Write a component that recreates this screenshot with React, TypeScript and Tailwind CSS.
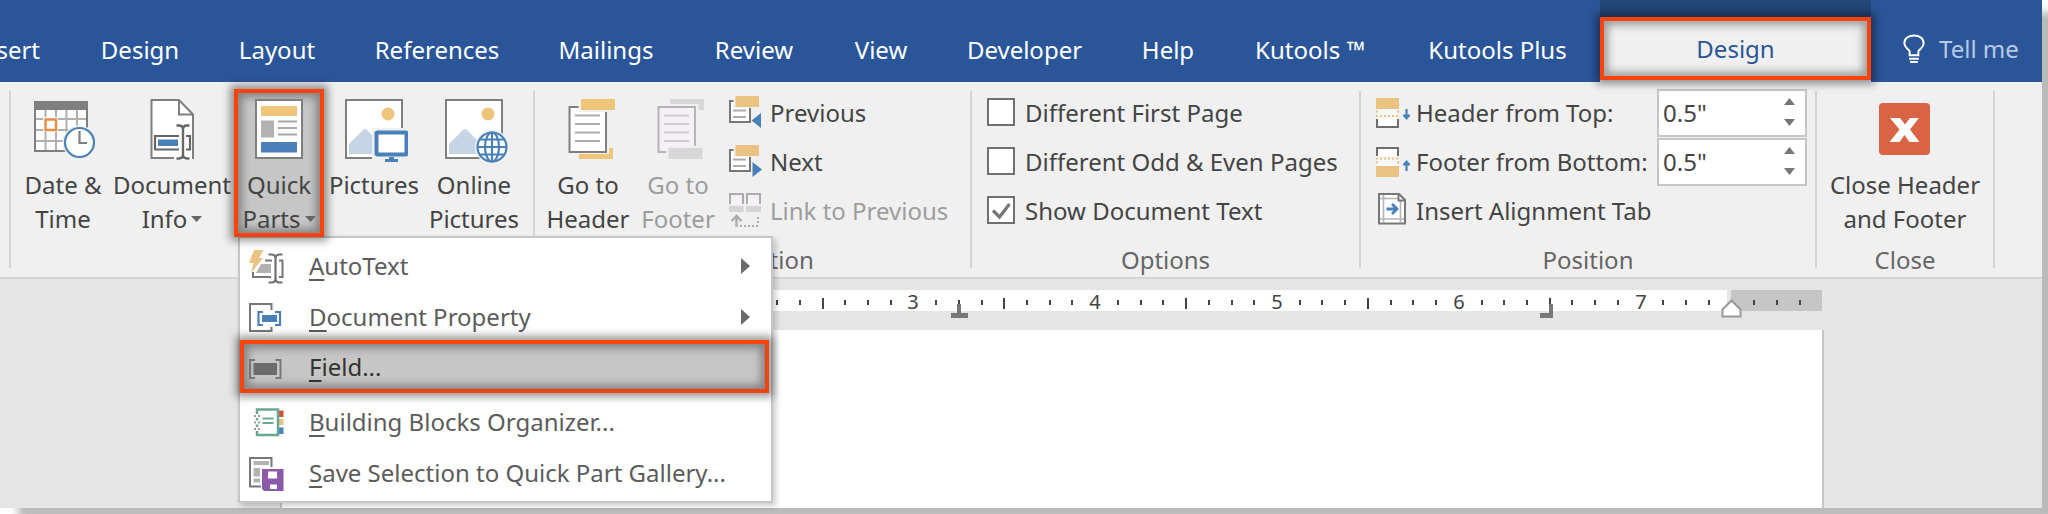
import type { ReactNode } from "react";

const GREY = "#7f7f7f";
const GOLD = "#efc57c";
const BLUE = "#4a80b8";

function Caret() {
  return (
    <svg width="11" height="6" viewBox="0 0 11 6" className="inline-block align-middle">
      <path d="M0 0h11L5.500 6z" fill="#666" />
    </svg>
  );
}

function DateTimeIcon() {
  return (
    <svg width="64" height="64" viewBox="0 0 64 64">
      <rect x="4" y="4" width="52" height="49" fill="#fff" stroke={GREY} strokeWidth="2" />
      <rect x="3" y="3" width="54" height="9" fill={GREY} />
      <path d="M14.500 12v40M25 12v40M35.500 12v40M46 12v40M5 21h50M5 32h50M5 43h50" stroke="#b0b0b0" strokeWidth="2" fill="none" />
      <rect x="12" y="19" width="15" height="15" fill="#fff" />
      <rect x="14.500" y="21.500" width="10.500" height="10.500" fill="#fff" stroke="#e88d45" strokeWidth="2.500" />
      <circle cx="48.500" cy="44.500" r="17" fill="#f0f0f0" />
      <circle cx="48.500" cy="44.500" r="14.500" fill="#fff" stroke={BLUE} strokeWidth="2.200" />
      <path d="M48.500 33v12H56" fill="none" stroke={GREY} strokeWidth="2.200" />
    </svg>
  );
}

function DocumentInfoIcon() {
  return (
    <svg width="44" height="64" viewBox="0 0 44 64">
      <path d="M1.500 2H29l14 14.500V60H1.500z" fill="#fff" stroke={GREY} strokeWidth="2" />
      <path d="M29 2v14.500h14" fill="none" stroke={GREY} strokeWidth="2" />
      <rect x="24" y="56" width="18" height="6" fill="#fff" />
      <path d="M29 38H5v13.500h24M36 38h4v13.500H36" fill="none" stroke="#666" strokeWidth="2.200" />
      <rect x="8" y="41.500" width="20" height="6.500" fill={BLUE} />
      <path d="M33 26v35" stroke="#fff" strokeWidth="6" />
      <path
        d="M26.500 27.500h2.500q4 0 4 4 0-4 4-4h2.500M33 30v28M26.500 60.500h2.500q4 0 4-4 0 4 4 4h2.500"
        fill="none"
        stroke="#666"
        strokeWidth="2.400"
      />
    </svg>
  );
}

function QuickPartsIcon() {
  return (
    <svg width="48" height="64" viewBox="0 0 48 64">
      <rect x="1" y="2" width="46" height="58" fill="#fff" stroke={GREY} strokeWidth="2" />
      <rect x="6" y="8" width="36" height="10" fill={GOLD} />
      <rect x="6" y="22.500" width="13" height="17" fill="#b2b2b2" />
      <path d="M23 23.500h19M23 30h19M23 36.500h19" stroke="#a8a8a8" strokeWidth="2" />
      <rect x="6" y="44" width="36" height="10.500" fill={BLUE} />
    </svg>
  );
}

function PictureBase() {
  return (
    <>
      <rect x="6" y="2" width="56" height="58" fill="#fff" stroke={GREY} strokeWidth="2" />
      <circle cx="48" cy="16" r="6.500" fill={GOLD} />
      <path d="M9 56V46L23 32q2-2 4 0l16 16v8z" fill="#c6d5e6" />
    </>
  );
}

function PicturesIcon() {
  return (
    <svg width="68" height="66" viewBox="0 0 68 66">
      <PictureBase />
      <rect x="32" y="30" width="38" height="36" fill="#f0f0f0" />
      <rect x="36.500" y="34.500" width="30" height="22" rx="1" fill="#fff" stroke={BLUE} strokeWidth="4" />
      <path d="M49 59h5v2h4v3H45v-3h4z" fill={BLUE} />
    </svg>
  );
}

function OnlinePicturesIcon() {
  return (
    <svg width="68" height="66" viewBox="0 0 68 66">
      <PictureBase />
      <circle cx="52" cy="49" r="17" fill="#f0f0f0" />
      <g fill="none" stroke={BLUE} strokeWidth="2.200">
        <circle cx="52" cy="49" r="14.500" fill="#fff" />
        <ellipse cx="52" cy="49" rx="7" ry="14.500" />
        <path d="M52 34.500v29M37.500 49h29M40 41.500h24M40 56.500h24" />
      </g>
    </svg>
  );
}

function GoToHeaderIcon() {
  return (
    <svg width="56" height="64" viewBox="-2 0 56 64">
      <path d="M47 50h4v11H17v-5h30z" fill={GOLD} />
      <rect x="7.500" y="9" width="36.500" height="45" fill="#fff" stroke={GREY} strokeWidth="2" />
      <rect x="16.500" y="0" width="37" height="14" fill="#f0f0f0" />
      <rect x="19" y="1" width="34" height="11" fill={GOLD} />
      <path d="M13 17.500h25M13 26h25M13 34.500h25M13 43h25" stroke="#acacac" strokeWidth="2" />
    </svg>
  );
}

function GoToFooterIcon() {
  return (
    <svg width="56" height="64" viewBox="0 0 56 64">
      <path d="M20 1h34v11h-5.500V6H20z" fill="#d8d6d8" />
      <rect x="8.500" y="9" width="36.500" height="45" fill="#f6f1f6" stroke="#b4b4b4" strokeWidth="2" />
      <rect x="16" y="48" width="38" height="14" fill="#f0f0f0" />
      <rect x="18.500" y="50" width="34" height="11" fill="#d8d6d8" />
      <path d="M14 17.500h25M14 26h25M14 34.500h25M14 43h25" stroke="#cfcbcf" strokeWidth="2" />
    </svg>
  );
}

function StepIcon({ forward = false }: { forward?: boolean }) {
  return (
    <svg width="34" height="34" viewBox="0 0 34 34">
      <rect x="1" y="6" width="20" height="21" fill="#fff" stroke="#777" strokeWidth="2" />
      <rect x="4.500" y="0" width="28" height="13" fill="#f0f0f0" />
      <rect x="6.500" y="1" width="23.500" height="11" fill="#eac282" />
      <path d="M4 15.500h13M4 22h13" stroke="#acacac" strokeWidth="2" />
      <rect x="22" y="14" width="12" height="20" fill="#f0f0f0" />
      <path d={forward ? "M23.500 18v15l9.500-7.500z" : "M32 18v15l-9.500-7.500z"} fill={BLUE} />
    </svg>
  );
}

function LinkPreviousIcon() {
  return (
    <svg width="34" height="34" viewBox="0 0 34 34" fill="none" stroke="#acacac" strokeWidth="2">
      <path d="M1 11V1h13v10M18 11V1h13v10" fill="#f6f1f6" />
      <path d="M0 16h14.500M17 16h15" stroke="#d6d4d6" strokeWidth="6" />
      <path d="M7.500 34V23M2.500 28l5-5 5 5" strokeWidth="2.400" />
      <path d="M11 33h20M29 24v8" strokeDasharray="2 2" />
    </svg>
  );
}

function FromTopIcon() {
  return (
    <svg width="36" height="34" viewBox="0 0 36 34" fill="none">
      <rect x="0" y="3" width="23" height="11" fill="#eac282" />
      <rect x="1" y="14" width="21" height="18" fill="#f8f8f8" />
      <path d="M0 21h23M1 15.500v4M22 15.500v4" stroke="#eac282" strokeWidth="2" strokeDasharray="2 2" />
      <path d="M1 24v8h21v-8" fill="#fff" stroke="#6e6e6e" strokeWidth="2" />
      <path d="M30.500 14v7" stroke={BLUE} strokeWidth="2.200" />
      <path d="M27 19.500h7v1.500l-3.500 4-3.500-4z" fill={BLUE} />
    </svg>
  );
}

function FromBottomIcon() {
  return (
    <svg width="36" height="34" viewBox="0 0 36 34" fill="none">
      <rect x="1" y="4" width="21" height="18" fill="#f8f8f8" />
      <path d="M1 12V4h21v8" fill="#fff" stroke="#6e6e6e" strokeWidth="2" />
      <path d="M0 14.500h23M1 17.500v3M22 17.500v3" stroke="#eac282" strokeWidth="2" strokeDasharray="2 2" />
      <rect x="0" y="22" width="23" height="11" fill="#eac282" />
      <path d="M30.500 27v-7" stroke={BLUE} strokeWidth="2.200" />
      <path d="M27 21.500h7V20l-3.500-4-3.500 4z" fill={BLUE} />
    </svg>
  );
}

function AlignmentTabIcon() {
  return (
    <svg width="36" height="34" viewBox="0 0 36 34" fill="none">
      <path d="M3 1h20l6 6v23.500H3z" fill="#fff" stroke="#777" strokeWidth="2" />
      <path d="M7.500 2v28M24.500 8v22M4 5.500h18M4 26h24" stroke="#b4b4b4" strokeWidth="1.600" />
      <path d="M22.500 1v6.500H29" stroke="#777" strokeWidth="2" />
      <path d="M10.500 16h10M16 11l5 5-5 5" stroke={BLUE} strokeWidth="2.800" />
    </svg>
  );
}

function CloseIcon() {
  return (
    <svg width="52" height="64" viewBox="0 0 52 64">
      <rect x="0" y="5" width="51" height="52" rx="4" fill="#d96345" />
      <path d="M11 20h10l5 6.500 5-6.500h9l-9 11.500L40.500 44h-10L25.500 37l-5 7h-10l10-12.500z" fill="#fff" />
    </svg>
  );
}

function BulbIcon() {
  return (
    <svg width="22" height="30" viewBox="0 0 22 31" fill="none" stroke="#fff" strokeWidth="2">
      <path d="M6.500 22v-4C5.500 15.500 1 14 1 9.500 1 4.500 5.500 1.500 11 1.500s10 3 10 8c0 4.500-4.500 6-5.500 8.500v4zM6 25.500h10M7 29h8" />
    </svg>
  );
}

function AutoTextIcon() {
  return (
    <svg width="36" height="36" viewBox="0 0 36 36" fill="none">
      <path d="M8 29h14M16 12.500h7M4 24v5h5M30 12.500h3.500V29H30" stroke="#777" strokeWidth="2" />
      <path d="M12 16h10v9H7z" fill="#b2b2b2" />
      <path d="M5 2h9.500L10 10h4L2 25l2.500-10H0z" fill="#eac282" />
      <path
        d="M19.500 6.500h3q4 0 4 4 0-4 4-4h3M26.500 9v23M19.500 34.500h3q4 0 4-4 0 4 4 4h3"
        stroke="#707070"
        strokeWidth="2.200"
      />
    </svg>
  );
}

function DocPropertyIcon() {
  return (
    <svg width="36" height="36" viewBox="0 0 36 36" fill="none">
      <path d="M22.500 11V5H1v27h21.500v-4" stroke="#777" strokeWidth="2" />
      <path d="M14 13H9.500v13H14M26 13h5v13h-5" stroke={BLUE} strokeWidth="2.200" />
      <rect x="13" y="16" width="15" height="7" fill={BLUE} />
    </svg>
  );
}

function FieldIcon() {
  return (
    <svg width="36" height="36" viewBox="0 0 36 36" fill="none">
      <path d="M6 11H1v18h5M26.500 11h5v18h-5" stroke="#777" strokeWidth="2" />
      <rect x="4.500" y="14" width="23.500" height="12" fill="#6c6c6c" />
    </svg>
  );
}

function OrganizerIcon() {
  return (
    <svg width="36" height="36" viewBox="0 0 36 36" fill="none">
      <rect x="30" y="6.500" width="4.500" height="6.500" fill="#d6532f" />
      <rect x="30" y="15" width="4.500" height="6" fill="#e8c283" />
      <rect x="30" y="23.500" width="4.500" height="6.500" fill={BLUE} />
      <rect x="8" y="5.500" width="21" height="25.500" fill="#fff" stroke="#6aa793" strokeWidth="2.500" />
      <path d="M13.500 14.500h11M13.500 19h11" stroke="#6aa793" strokeWidth="2" />
      <path d="M5 12h6M5 18.500h6M5 25h6" stroke="#fff" strokeWidth="4" />
      <path d="M5 12h6M5 18.500h6M5 25h6" stroke="#9a9a9a" strokeWidth="2" strokeDasharray="2 2" />
    </svg>
  );
}

function SaveSelectionIcon() {
  return (
    <svg width="36" height="36" viewBox="0 0 36 36" fill="none">
      <path d="M22.500 12V3H1v28.500h11" stroke="#777" strokeWidth="2" />
      <path d="M4.500 6h15.500v4H4.500zM4.500 13H11v8.500H4.500zM4.500 23.500H11v4H4.500z" fill="#b2b2b2" />
      <path d="M13 14h21.500v22H15l-2-2z" fill="#8b5aa8" />
      <rect x="19" y="16.500" width="9" height="7" fill="#fff" />
      <rect x="21" y="29.500" width="7" height="4.500" fill="#fff" />
    </svg>
  );
}

const tabs = [
  { name: "Design", width: "w-[136px]" },
  { name: "Layout", width: "w-[138px]" },
  { name: "References", width: "w-[182px]" },
  { name: "Mailings", width: "w-[156px]" },
  { name: "Review", width: "w-[140px]" },
  { name: "View", width: "w-[114px]" },
  { name: "Developer", width: "w-[173px]" },
  { name: "Help", width: "w-[114px]" },
  { name: "Kutools ™", width: "w-[170px]" },
  { name: "Kutools Plus", width: "w-[205px]" },
];

const callout =
  "border-4 border-[#f9430a] shadow-[0_0_8px_4px_rgba(0,0,0,0.4),inset_0_0_8px_4px_rgba(0,0,0,0.35)]";

function TabBar() {
  return (
    <nav className="flex h-[82px] bg-[#2a5699] text-white">
      <button className="flex w-[72px] items-center justify-end overflow-hidden pt-[17px] pr-8">Insert</button>
      {tabs.map((t) => (
        <button key={t.name} className={`${t.width} shrink-0 pt-[17px] whitespace-nowrap`}>
          {t.name}
        </button>
      ))}
      <div className="w-[271px] shrink-0 bg-[#f0f0f0]">
        <div className="h-[17px] bg-[#24477a]" />
        <button className={`relative h-[63px] w-full text-[#2a5699] ${callout}`}>Design</button>
      </div>
      <button className="flex items-center gap-[14px] pt-4 pl-8 whitespace-nowrap text-[#b8c9e2]">
        <BulbIcon />
        Tell me
      </button>
    </nav>
  );
}

function Separator() {
  return <div className="mt-0.5 h-[177px] w-0.5 shrink-0 bg-[#d4d4d4]" />;
}

function Group({ caption, width, children }: { caption: string; width: string; children: ReactNode }) {
  return (
    <section className={`flex shrink-0 flex-col ${width}`}>
      <div className="flex h-[157px] items-start">{children}</div>
      <h2 className="text-center leading-7 text-[#666]">{caption}</h2>
    </section>
  );
}

type BigButtonProps = {
  icon: ReactNode;
  lines: [string, string?];
  width: string;
  caret?: boolean;
  disabled?: boolean;
  look?: string;
};

function BigButton({ icon, lines, width, caret, disabled, look = "pt-[9px]" }: BigButtonProps) {
  return (
    <button
      disabled={disabled}
      className={`flex h-[148px] shrink-0 flex-col items-center whitespace-nowrap leading-[34px] ${width} ${look} ${disabled ? "text-[#9d9d9d]" : ""}`}
    >
      <span className="mb-1.5 flex h-16 items-start">{icon}</span>
      <span>{lines[0]}</span>
      <span className="flex items-center gap-1">
        {lines[1]}
        {caret && <Caret />}
      </span>
    </button>
  );
}

type SmallButtonProps = { icon: ReactNode; label: string; gap?: string; disabled?: boolean };

function SmallButton({ icon, label, gap = "gap-[7px]", disabled }: SmallButtonProps) {
  return (
    <button
      disabled={disabled}
      className={`flex h-[49px] items-center pb-0.5 whitespace-nowrap ${gap} ${disabled ? "text-[#9d9d9d]" : ""}`}
    >
      <span className="mb-0.5">{icon}</span>
      {label}
    </button>
  );
}

function Option({ label, checked }: { label: string; checked?: boolean }) {
  return (
    <label className="flex h-[49px] items-center gap-2.5 pb-0.5 whitespace-nowrap">
      <span className="relative mb-0.5 flex">
        <input type="checkbox" defaultChecked={checked} className="peer size-7 appearance-none border-2 border-[#707070] bg-white" />
        <svg viewBox="0 0 28 28" className="pointer-events-none absolute inset-0 hidden size-7 peer-checked:block">
          <path d="M6 14.500l6.500 6.500L22.500 8" fill="none" stroke="#777" strokeWidth="3.200" />
        </svg>
      </span>
      {label}
    </label>
  );
}

function Measure({ id, icon, label }: { id: string; icon: ReactNode; label: string }) {
  return (
    <div className="flex h-[49px] items-start">
      <label htmlFor={id} className="flex h-[49px] w-[281px] items-center gap-1 pb-0.5 whitespace-nowrap">
        <span className="mb-0.5">{icon}</span>
        {label}
      </label>
      <div className="flex h-12 w-[150px] items-center border-2 border-[#c6c6c6] bg-white">
        <input id={id} type="text" defaultValue={'0.5"'} className="h-full w-[114px] bg-transparent pb-0.5 pl-1 text-[#444] outline-none" />
        <div className="flex flex-1 flex-col items-center gap-[14px] pb-0.5">
          <button aria-label={`Increase ${label}`}>
            <svg width="11" height="7" viewBox="0 0 11 7" className="block">
              <path d="M0 7h11L5.500 0z" fill="#777" />
            </svg>
          </button>
          <button aria-label={`Decrease ${label}`}>
            <svg width="11" height="7" viewBox="0 0 11 7" className="block">
              <path d="M0 0h11L5.500 7z" fill="#777" />
            </svg>
          </button>
        </div>
      </div>
    </div>
  );
}

type MenuItemProps = { icon: ReactNode; hot: string; rest: string; submenu?: boolean; look?: string };

function MenuItem({ icon, hot, rest, submenu, look = "h-[51px] border-4 border-transparent" }: MenuItemProps) {
  return (
    <button role="menuitem" className={`flex items-center pr-[17px] pl-[5px] whitespace-nowrap ${look}`}>
      {icon}
      <span className="ml-6">
        <span className="underline decoration-2 underline-offset-4">{hot}</span>
        {rest}
      </span>
      {submenu && (
        <svg width="9" height="16" viewBox="0 0 9 16" className="ml-auto">
          <path d="M0 0v16l9-8z" fill="#6a6a6a" />
        </svg>
      )}
    </button>
  );
}

function QuickPartsMenu() {
  return (
    <div
      role="menu"
      className="absolute top-[147px] left-1 z-10 flex w-[535px] flex-col border-2 border-[#c6c6c6] bg-white pt-0.5 pb-[3px] text-[#5c5c5c] shadow-[3px_3px_6px_rgba(0,0,0,0.2)]"
    >
      <MenuItem icon={<AutoTextIcon />} hot="A" rest="utoText" submenu />
      <MenuItem icon={<DocPropertyIcon />} hot="D" rest="ocument Property" submenu />
      <MenuItem
        icon={<FieldIcon />}
        hot="F"
        rest="ield..."
        look={`-mt-0.5 mr-0.5 mb-[3px] h-[53px] bg-[#c6c6c6] text-[#333] ${callout}`}
      />
      <MenuItem icon={<OrganizerIcon />} hot="B" rest="uilding Blocks Organizer..." />
      <MenuItem icon={<SaveSelectionIcon />} hot="S" rest="ave Selection to Quick Part Gallery..." />
    </div>
  );
}

function Ribbon() {
  return (
    <div className="flex h-[197px] shrink-0 items-start border-b-2 border-[#d5d5d5] bg-[#f0f0f0] pt-[7px] pl-[9px] text-[#444]">
      <Separator />
      <Group caption="Insert" width="w-[522px] pl-[5px]">
        <BigButton icon={<DateTimeIcon />} lines={["Date &", "Time"]} width="w-[94px]" />
        <BigButton icon={<DocumentInfoIcon />} lines={["Document", "Info"]} width="w-[124px]" caret />
        <div className="relative">
          <BigButton
            icon={<QuickPartsIcon />}
            lines={["Quick", "Parts"]}
            width="w-[90px]"
            caret
            look={`relative z-20 bg-[#c6c6c6] pt-[5px] ${callout}`}
          />
          <QuickPartsMenu />
        </div>
        <BigButton icon={<PicturesIcon />} lines={["Pictures"]} width="w-[100px]" />
        <BigButton icon={<OnlinePicturesIcon />} lines={["Online", "Pictures"]} width="w-[100px]" />
      </Group>
      <Separator />
      <Group caption="Navigation" width="w-[435px]">
        <div className="flex pl-2">
          <BigButton icon={<GoToHeaderIcon />} lines={["Go to", "Header"]} width="w-[90px]" />
          <BigButton icon={<GoToFooterIcon />} lines={["Go to", "Footer"]} width="w-[90px]" disabled />
          <div className="pl-1.5">
            <SmallButton icon={<StepIcon />} label="Previous" />
            <SmallButton icon={<StepIcon forward />} label="Next" />
            <SmallButton icon={<LinkPreviousIcon />} label="Link to Previous" disabled />
          </div>
        </div>
      </Group>
      <Separator />
      <Group caption="Options" width="w-[387px]">
        <div className="pl-[15px]">
          <Option label="Different First Page" />
          <Option label="Different Odd & Even Pages" />
          <Option label="Show Document Text" checked />
        </div>
      </Group>
      <Separator />
      <Group caption="Position" width="w-[454px]">
        <div className="pl-[15px]">
          <Measure id="header-top" icon={<FromTopIcon />} label="Header from Top:" />
          <Measure id="footer-bottom" icon={<FromBottomIcon />} label="Footer from Bottom:" />
          <SmallButton icon={<AlignmentTabIcon />} label="Insert Alignment Tab" gap="gap-1" />
        </div>
      </Group>
      <Separator />
      <Group caption="Close" width="w-[176px]">
        <BigButton icon={<CloseIcon />} lines={["Close Header", "and Footer"]} width="w-full" />
      </Group>
      <Separator />
    </div>
  );
}

const ZERO = 88;
const INCH = 181.8;

function Ruler() {
  const eighths = Array.from({ length: 46 }, (_, i) => i + 18);
  return (
    <svg width="1542" height="40" viewBox="0 0 1542 40" className="block overflow-visible">
      <rect x="0" y="0" width="1542" height="21" fill="#c6c6c6" />
      <rect x={ZERO} y="0" width={1451 - ZERO} height="21" fill="#fff" />
      <rect x="1447" y="0" width="4" height="21" fill="#e5e5e5" />
      {eighths.map((n) => {
        const x = Math.round(ZERO + (n * INCH) / 8);
        if (n % 8 === 0) {
          return (
            <text key={n} x={x} y="19" fontSize="20" textAnchor="middle" fill="#444">
              {n / 8}
            </text>
          );
        }
        return n % 4 === 0 && n < 60 ? (
          <rect key={n} x={x - 1} y="8" width="2" height="11" fill="#444" />
        ) : (
          <rect key={n} x={x - 1} y="10" width="2" height="5" fill="#444" />
        );
      })}
      <path d="M677 14h4v9h7v5h-17v-5h6z" fill="#777" />
      <path d="M1269 14h4v14h-13v-5h9z" fill="#777" />
      <path d="M1442.500 26.500v-7l9-9 9 9v7z" fill="#fff" stroke="#999" strokeWidth="2" />
    </svg>
  );
}

export default function App() {
  return (
    <div className="h-screen overflow-hidden bg-white pr-1.5 pb-1.5 font-['Noto_Sans',sans-serif] text-[24px] leading-8">
      <div className="flex h-full flex-col bg-[#e5e5e5] shadow-[18px_12px_8px_rgba(0,0,0,0.27)]">
        <TabBar />
        <Ribbon />
        <main className="flex min-h-0 flex-1 flex-col pt-[11px] pr-[218px] pl-[280px]">
          <Ruler />
          <div className="flex-1 border-x-2 border-[#c6c6c6] bg-white" />
        </main>
      </div>
    </div>
  );
}
